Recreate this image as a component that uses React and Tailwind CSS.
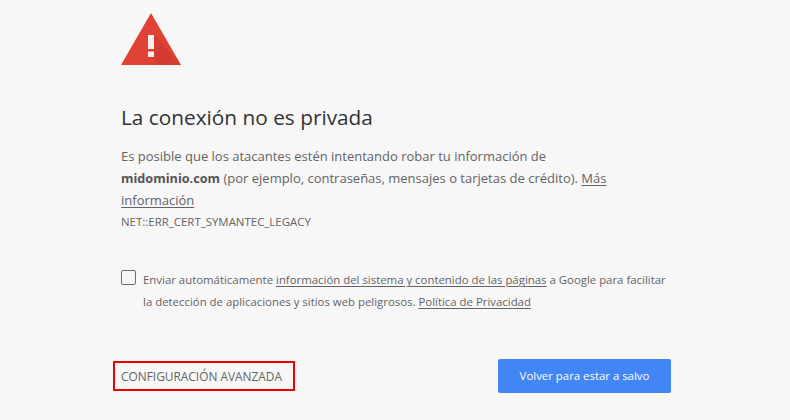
const WarningIcon = () => (
  <svg width="60" height="52" viewBox="0 0 60 52" className="block">
    <polygon points="30,0 60,52 0,52" fill="#e04335" />
    <polygon points="33,22 60,52 36,52 30,44 33,36" fill="#c9372b" opacity="0.55" />
    <rect x="27" y="22" width="6" height="14" fill="#fbeeed" />
    <rect x="27" y="38.5" width="6" height="5.5" fill="#fbeeed" />
  </svg>
);

const App = () => {
  return (
    <div className="w-[790px] h-[420px] overflow-hidden bg-[#f7f7f7] pl-[121px] pr-[100px] pt-[13px] font-['Open_Sans','Noto_Sans',sans-serif] text-[#646464]">
      <WarningIcon />

      <h1 className="mt-[37px] text-[20.8px] leading-[30px] font-normal text-[#333333]">
        La conexión no es privada
      </h1>

      <p className="mt-[13px] text-[13px] leading-[22px] w-[510px]">
        Es posible que los atacantes estén intentando robar tu información de{" "}
        <strong className="font-bold text-[12.7px] text-[#555555]">midominio.com</strong> (por ejemplo, contraseñas, mensajes o tarjetas de crédito).{" "}
        <a className="underline underline-offset-2">Más información</a>
      </p>
      <div className="mt-[3px] text-[11.45px] leading-[16px]">NET::ERR_CERT_SYMANTEC_LEGACY</div>

      <div className="mt-[39px] flex items-start gap-[7px]">
        <span className="mt-[1px] w-[15px] h-[15px] shrink-0 rounded-[2px] border border-[#6e6e6e] bg-[#f7f7f7]" />
        <p className="text-[11.4px] leading-[22px] w-[526px]">
          Enviar automáticamente <a className="underline underline-offset-2">información del sistema y contenido de las páginas</a> a Google para facilitar la detección de aplicaciones y sitios web peligrosos. <a className="underline underline-offset-2">Política de Privacidad</a>
        </p>
      </div>

      <div className="mt-[46px] w-[550px] flex items-center justify-between">
        <div className="relative text-[11.9px] leading-[34px]">
          CONFIGURACIÓN AVANZADA
          <span className="absolute -left-[8px] top-[2px] w-[182px] h-[30px] border-2 border-[#ee0000]" />
        </div>
        <button className="w-[173px] h-[34px] rounded-[2px] bg-[#4285f4] text-white text-[11.4px]">
          Volver para estar a salvo
        </button>
      </div>
    </div>
  );
};

export default App;
